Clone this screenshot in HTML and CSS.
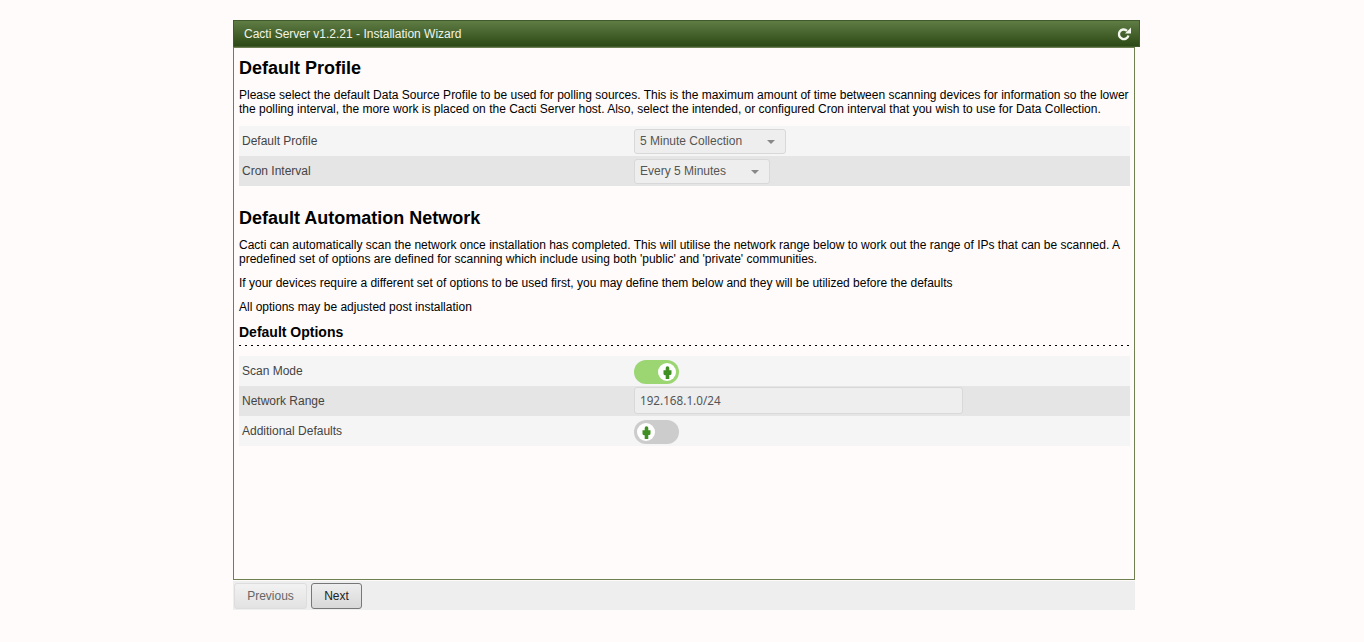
FILE: index.html
```html
<!DOCTYPE html>
<html lang="en">
<head>
    <meta charset="UTF-8">
    <title>Cacti Server v1.2.21 - Installation Wizard</title>
    <link rel="stylesheet" href="styles.css">
</head>
<body>
    <div class="wizard">
        <div class="wizard__title">
            <span>Cacti Server v1.2.21 - Installation Wizard</span>
            <svg class="wizard__refresh" width="14" height="14" viewBox="0 0 14 14">
                <path d="M11.4 8.4a4.8 4.8 0 1 1-1.4-4.6" fill="none" stroke="#f4f7ee" stroke-width="2.4"/>
                <path d="M8 6.4h6V.4z" fill="#f4f7ee"/>
            </svg>
        </div>
        <main class="wizard__body">
            <h2>Default Profile</h2>
            <p>Please select the default Data Source Profile to be used for polling sources. This is the maximum amount of time between scanning devices for information so the lower the polling interval, the more work is placed on the Cacti Server host. Also, select the intended, or configured Cron interval that you wish to use for Data Collection.</p>
            <div class="form">
                <div class="form__row">
                    <div class="form__label">Default Profile</div>
                    <div class="select select--wide">5 Minute Collection<i class="select__arrow"></i></div>
                </div>
                <div class="form__row form__row--alt">
                    <div class="form__label">Cron Interval</div>
                    <div class="select">Every 5 Minutes<i class="select__arrow"></i></div>
                </div>
            </div>
            <h2 class="second">Default Automation Network</h2>
            <p>Cacti can automatically scan the network once installation has completed. This will utilise the network range below to work out the range of IPs that can be scanned. A predefined set of options are defined for scanning which include using both 'public' and 'private' communities.</p>
            <p class="gap">If your devices require a different set of options to be used first, you may define them below and they will be utilized before the defaults</p>
            <p class="gap">All options may be adjusted post installation</p>
            <h3>Default Options</h3>
            <div class="form">
                <div class="form__row">
                    <div class="form__label">Scan Mode</div>
                    <div class="toggle toggle--on">
                        <span class="toggle__knob">
                            <svg width="9" height="13" viewBox="0 0 9 13"><path d="M2.7 13V9.2H1.900Q.5 9.200.5 7.800V4.200h2.200V2Q2.700.3 4.500.3T6.300 2v2.200h2.200v3.200Q8.500 9 7 9h-.7v4z" fill="#3f8f22"/></svg>
                        </span>
                    </div>
                </div>
                <div class="form__row form__row--alt">
                    <div class="form__label">Network Range</div>
                    <input class="textbox" type="text" value="192.168.1.0/24">
                </div>
                <div class="form__row">
                    <div class="form__label">Additional Defaults</div>
                    <div class="toggle">
                        <span class="toggle__knob">
                            <svg width="9" height="13" viewBox="0 0 9 13"><path d="M2.7 13V9.2H1.900Q.5 9.200.5 7.800V4.200h2.200V2Q2.700.3 4.500.3T6.300 2v2.200h2.200v3.200Q8.500 9 7 9h-.7v4z" fill="#3f8f22"/></svg>
                        </span>
                    </div>
                </div>
            </div>
        </main>
        <div class="wizard__buttons">
            <button class="btn btn--disabled">Previous</button>
            <button class="btn btn--active">Next</button>
        </div>
    </div>
</body>
</html>
```

FILE: styles.css
```css
* {box-sizing: border-box;}
body {margin: 0;padding: 20px 0 0 233px;background: #fffbfa;color: #000;font-family: "Liberation Sans", Arial, sans-serif;font-size: 12px;}
h2 {margin: 0;font-size: 18px;line-height: 20px;font-weight: bold;}
h2.second {margin-top: 22px;}
h3 {margin: 10px 0 0;padding-bottom: 5px;height: 22px;font-size: 14px;line-height: 16px;font-weight: bold;background: linear-gradient(90deg, #000 2px, transparent 2px) left bottom / 6px 1px repeat-x;}
p {margin: 10px 0 0;line-height: 14px;}
p.gap {margin-top: 10px;}
.wizard {width: 902px;}
.wizard__title {display: flex;align-items: center;justify-content: space-between;width: 907px;height: 27px;padding: 0 8px 0 10px;color: #f1f4e8;background: linear-gradient(#5f7c45, #2d4a16);border: 1px solid #3f5a2c;}
.wizard__refresh {display: block;}
.wizard__body {height: 533px;padding: 10px 4px 0 5px;border: 1px solid #6f7f50;}
.form {margin-top: 10px;}
.form__row {display: flex;align-items: center;height: 30px;padding-left: 3px;background: #f5f5f5;color: #444;}
.form__row--alt {background: #e5e5e5;}
.form__label {width: 392px;}
.select {position: relative;width: 136px;height: 25px;padding-left: 5px;line-height: 23px;color: #555;background: #eee;border: 1px solid #d8d8d8;border-radius: 3px;}
.select--wide {width: 152px;}
.select__arrow {position: absolute;right: 10px;top: 10px;border: 4px solid transparent;border-top: 4px solid #888;border-bottom: 0;}
.textbox {width: 329px;height: 27px;margin-bottom: 2px;padding: 0 5px;font-family: "Noto Sans", sans-serif;font-size: 11.7px;color: #555;background: #eee;border: 1px solid #d8d8d8;border-radius: 3px;outline: none;}
.toggle {display: flex;align-items: center;width: 45px;height: 24px;margin-top: 2px;padding: 0 3px;background: #ccc;border-radius: 12px;}
.toggle--on {justify-content: flex-end;background: #9bd673;}
.toggle__knob {display: flex;align-items: center;justify-content: center;width: 18px;height: 18px;background: #fff;border-radius: 50%;}
.wizard__buttons {display: flex;align-items: center;gap: 4px;height: 29px;margin-top: 1px;padding: 1px 0 0 1px;background: #eeeeee;}
.btn {height: 26px;padding: 0 12px;font-family: inherit;font-size: 12px;background: linear-gradient(#f2f2f2, #e2e2e2);border: 1px solid #ddd;border-radius: 3px;}
.btn--disabled {width: 73px;color: #666;}
.btn--active {width: 51px;color: #222;background: linear-gradient(#eeeeee, #d8d8d8);border-color: #777;}
```
